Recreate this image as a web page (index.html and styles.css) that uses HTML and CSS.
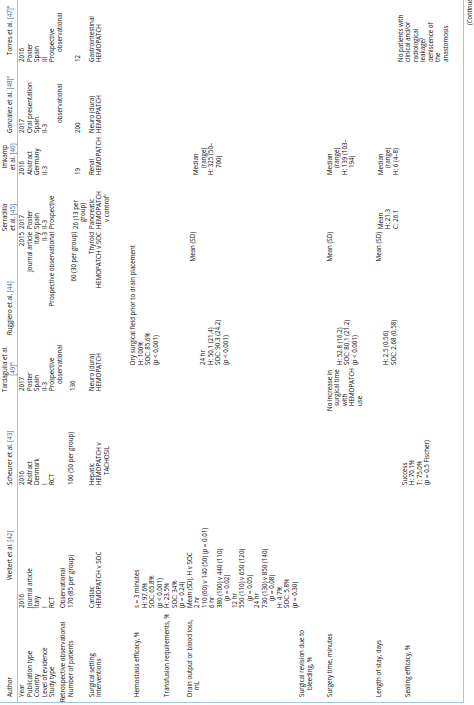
FILE: index.html
```html
<!DOCTYPE html>
<html lang="en">
<head>
<meta charset="utf-8">
<title>Table (continued)</title>
<link rel="stylesheet" href="styles.css">
</head>
<body>
<div class="sheet">
  <div class="tbl">
    <div class="grid">
      <!-- header -->
      <div class="h c-author"><span>Author</span></div>
      <div class="h c-weltert"><span>Weltert et al. <b class="ref">[42]</b></span></div>
      <div class="h"><span>Scheurer et al. <b class="ref">[43]</b></span></div>
      <div class="h two c-tard"><span class="hb">Tardaguila et al.<br><b class="ref">[49]</b><sup>a</sup></span></div>
      <div class="h c-rug"><span>Ruggiero et al. <b class="ref">[44]</b></span></div>
      <div class="h two c-serr"><span class="hb">Serradilla<br>et al. <b class="ref">[45]</b></span></div>
      <div class="h two c-imk"><span class="hb">Imkamp<br>et al. <b class="ref">[46]</b></span></div>
      <div class="h"><span>González et al. <b class="ref">[48]</b><sup>a</sup></span></div>
      <div class="h c-torres"><span>Torres et al. <b class="ref">[47]</b><sup>a</sup></span></div>

      <!-- year -->
      <div class="lab">Year</div>
      <div>2016</div>
      <div>2016</div>
      <div>2017</div>
      <div class="r">2015</div>
      <div>2017</div>
      <div>2016</div>
      <div>2017</div>
      <div>2016</div>

      <!-- publication type -->
      <div class="lab">Publication type</div>
      <div>Journal article</div>
      <div>Abstract</div>
      <div>Poster</div>
      <div class="r">Journal article</div>
      <div>Poster</div>
      <div>Abstract</div>
      <div>Oral presentation</div>
      <div>Poster</div>

      <!-- country -->
      <div class="lab">Country</div>
      <div>Italy</div>
      <div>Denmark</div>
      <div>Spain</div>
      <div class="r">Italy</div>
      <div>Spain</div>
      <div>Germany</div>
      <div>Spain</div>
      <div>Spain</div>

      <!-- level of evidence -->
      <div class="lab">Level of evidence</div>
      <div>I</div>
      <div>I</div>
      <div>II-3</div>
      <div class="r">II-3</div>
      <div>II-3</div>
      <div>II-3</div>
      <div>II-3</div>
      <div>III</div>

      <!-- study type -->
      <div class="lab">Study type</div>
      <div>RCT</div>
      <div>RCT</div>
      <div>Prospective<span class="i">observational</span></div>
      <div class="r">Prospective observational</div>
      <div>Prospective</div>
      <div></div>
      <div><br><span class="i wide">observational</span></div>
      <div>Prospective<span class="i wide">observational</span></div>

      <!-- retrospective line -->
      <div class="lab retro">Retrospective observational</div>
      <div>Observational</div>
      <div></div><div></div><div></div><div></div><div></div><div></div><div></div>

      <!-- number of patients -->
      <div class="lab">Number of patients</div>
      <div>170 (85 per group)</div>
      <div>100 (50 per group)</div>
      <div class="n2">136</div>
      <div class="r n3">60 (30 per group)</div>
      <div class="n5">26 (13 per<span class="i">group)</span></div>
      <div class="n7">19</div>
      <div class="n7">200</div>
      <div class="n7">12</div>

      <!-- surgical setting -->
      <div class="lab">Surgical setting</div>
      <div>Cardiac</div>
      <div>Hepatic</div>
      <div>Neuro (dura)</div>
      <div class="r">Thyroid</div>
      <div>Pancreatic</div>
      <div>Renal</div>
      <div>Neuro (dura)</div>
      <div>Gastrointestinal</div>

      <!-- interventions -->
      <div class="lab">Interventions</div>
      <div>HEMOPATCH v SOC</div>
      <div>HEMOPATCH v<span class="i wide">TACHOSIL</span></div>
      <div>HEMOPATCH</div>
      <div class="r">HEMOPATCH v SOC</div>
      <div>HEMOPATCH<span class="i">v control<sup>b</sup></span></div>
      <div>HEMOPATCH</div>
      <div>HEMOPATCH</div>
      <div>HEMOPATCH</div>

      <!-- hemostasis efficacy -->
      <div class="lab">Hemostasis efficacy, %</div>
      <div>s = 3 minutes<br>H: 97.6%<br>SOC: 65.8%<br>(<i>p</i> &lt; 0.001)</div>
      <div></div>
      <div></div>
      <div class="up4">Dry surgical field prior to drain placement<br>H: 100%<br>SOC: 85.6%<br>(<i>p</i> &lt; 0.001)</div>
      <div></div><div></div><div></div><div></div>

      <!-- transfusion -->
      <div class="lab">Transfusion requirements, %</div>
      <div>H: 23.5%<br>SOC: 34%<br>(<i>p</i> = 0.24)</div>
      <div></div><div></div><div></div><div></div><div></div><div></div><div></div>

      <!-- drain output -->
      <div class="lab">Drain output or blood loss,<span class="i">mL</span></div>
      <div>Mean (SD), H v SOC<br>2 hr<br>110 (60) v 140 (50) (<i>p</i> = 0.01)<br>6 hr<br>380 (100) v 440 (110)<span class="i">(<i>p</i> = 0.02)</span>12 hr<br>550 (110) v 650 (120)<span class="i">(<i>p</i> = 0.05)</span>24 hr<br>730 (130) v 850 (140)<span class="i">(<i>p</i> = 0.08)</span></div>
      <div></div>
      <div></div>
      <div><div class="r dn4">Mean (SD)</div><div class="gap">24 hr<br>H: 50.1 (21.4)<br>SOC: 90.3 (24.2)<br>(<i>p</i> &lt; 0.001)</div></div>
      <div></div>
      <div class="dn7">Median<span class="i">(range)</span>H: 325 (50–<span class="i">700)</span></div>
      <div></div><div></div>

      <!-- surgical revision -->
      <div class="lab dn22">Surgical revision due to<span class="i">bleeding, %</span></div>
      <div>H: 4.7%<br>SOC: 5.8%<br>(<i>p</i> = 0.30)</div>
      <div></div><div></div><div></div><div></div><div></div><div></div><div></div>

      <!-- surgery time -->
      <div class="lab">Surgery time, minutes</div>
      <div></div>
      <div></div>
      <div class="shift">No increase in<span class="i s5">surgical time</span><span class="i s5">with</span><span class="i s5">HEMOPATCH</span><span class="i s5">use</span></div>
      <div><div class="r">Mean (SD)</div><div class="gap">H: 52.8 (16.2)<br>SOC: 80.1 (21.2)<br>(<i>p</i> &lt; 0.001)</div></div>
      <div></div>
      <div>Median<span class="i">(range)</span>H: 139 (103–<span class="i">194)</span></div>
      <div></div><div></div>

      <!-- length of stay -->
      <div class="lab">Length of stay, days</div>
      <div></div><div></div><div></div>
      <div><div class="r">Mean (SD)</div>H: 2.5 (0.56)<br>SOC: 2.68 (0.58)</div>
      <div class="dn2">Mean<br>H: 21.3<br>C: 26.1</div>
      <div class="dn2">Median<span class="i">(range)</span>H: 6 (4–8)</div>
      <div></div><div></div>

      <!-- sealing efficacy -->
      <div class="lab dn3">Sealing efficacy, %</div>
      <div></div>
      <div>Success<br>H: 70.1%<br>T: 75.0%<br>(<i>p</i> = 0.5 Fischer)</div>
      <div></div><div></div><div></div><div></div><div></div>
      <div class="up4">No patients with<br>clinical and/or<br>radiological<br>leakage/<br>dehiscence of<br>the<br>anastomosis</div>
    </div>
  </div>
  <div class="continued">(<i>Continued</i>)</div>
</div>
</body>
</html>
```

FILE: styles.css
```css
html, body {
  margin: 0;
  padding: 0;
  overflow: hidden;
  background: #ffffff;
}

body {
  width: 474px;
  height: 705px;
  font-family: "Open Sans", "Noto Sans", sans-serif;
  font-size: 6.2px;
  line-height: 7.5px;
  color: #0d0d0d;
}

.sheet {
  width: 705px;
  height: 474px;
  transform-origin: 0 0;
  transform: translateY(705px) rotate(-90deg);
}

.tbl {
  margin-left: 2px;
  border-left: 1px solid #a9c3e2;
  border-bottom: 1px solid #a9c3e2;
  height: 463px;
}

.grid {
  display: grid;
  grid-template-columns: 94px 123px 94px 26px 136px 54px 42px 71px 62px;
  grid-template-rows: 18px 7.5px 7.5px 7.5px 7.5px 11px 7.5px 21px 7.5px 38px 30px 22.5px 90px 50px 49px 26px 62.5px;
}

.grid > div {
  white-space: nowrap;
  min-width: 0;
}

.h {
  box-sizing: border-box;
  border-bottom: 1px solid #a9c3e2;
  display: flex;
  align-items: flex-end;
  padding-bottom: 3.5px;
}

.h.two {
  padding-bottom: 1px;
}

.hb {
  display: inline-block;
  text-align: center;
}

.ref {
  font-weight: normal;
  color: #3e64ad;
}

sup {
  font-size: 4.2px;
  line-height: 0;
  vertical-align: 2.6px;
}

.c-author { padding-left: 5px; }
.c-weltert { padding-left: 28px; }
.c-tard { margin-left: -1px; }
.c-rug { padding-left: 30px; }
.c-serr { margin-left: -2px; }
.c-imk { padding-left: 5px; }
.c-torres { padding-left: 7px; }

.lab { padding-left: 5px; }

.retro { margin-left: -5px; }

.r {
  text-align: right;
  padding-right: 3px;
}

.i {
  display: block;
  padding-left: 7px;
}

.i.wide { padding-left: 10px; }
.i.s5 { padding-left: 5px; }

.gap { margin-top: 2.5px; }

.shift { margin-left: -20px; }

.n2 { padding-top: 2px; }
.n3 { padding-top: 3px; }
.n5 { padding-top: 5px; }
.n7 { padding-top: 7px; }

.up4 { margin-top: -4px; }
.dn2 { padding-top: 2px; }
.dn3 { padding-top: 3px; }
.dn4 { margin-top: 3.75px; }
.dn7 { padding-top: 6.75px; }
.dn22 { padding-top: 22.5px; }

.continued {
  margin-top: 2px;
  padding-left: 680px;
  white-space: nowrap;
}
```
